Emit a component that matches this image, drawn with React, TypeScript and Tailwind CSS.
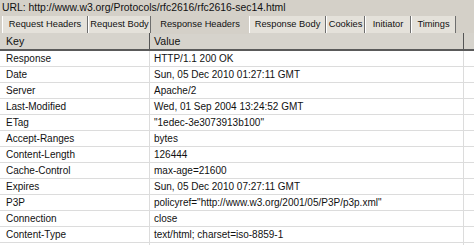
const tabs: [string, string][] = [
  ["Request Headers", "w-[86px]"],
  ["Request Body", "w-[63px]"],
  ["Response Headers", "w-[98px]"],
  ["Response Body", "w-[77px]"],
  ["Cookies", "w-[39px]"],
  ["Initiator", "w-[46px]"],
  ["Timings", "w-[45px]"],
];

const rows: [string, string][] = [
  ["Response", "HTTP/1.1 200 OK"],
  ["Date", "Sun, 05 Dec 2010 01:27:11 GMT"],
  ["Server", "Apache/2"],
  ["Last-Modified", "Wed, 01 Sep 2004 13:24:52 GMT"],
  ["ETag", "\"1edec-3e3073913b100\""],
  ["Accept-Ranges", "bytes"],
  ["Content-Length", "126444"],
  ["Cache-Control", "max-age=21600"],
  ["Expires", "Sun, 05 Dec 2010 07:27:11 GMT"],
  ["P3P", "policyref=\"http://www.w3.org/2001/05/P3P/p3p.xml\""],
  ["Connection", "close"],
  ["Content-Type", "text/html; charset=iso-8859-1"],
];

export default function App() {
  return (
    <div className="w-[474px] h-[245px] overflow-hidden bg-[#d4d0c8] text-[10px] text-[#111] font-['Liberation_Sans',sans-serif] leading-none whitespace-nowrap">
      <div className="h-[16px] flex items-center pl-[2px] text-[10.4px]">
        URL: http://www.w3.org/Protocols/rfc2616/rfc2616-sec14.html
      </div>
      <div className="h-[17px] flex items-end pl-[2px] text-[9.3px]">
        {tabs.map(([t, w]) =>
          t === "Response Headers" ? (
            <div key={t} className={`${w} shrink-0 h-[19px] flex items-center justify-center bg-[#d4d0c8] -mb-[1px]`}>
              {t}
            </div>
          ) : (
            <div
              key={t}
              className={`${w} shrink-0 h-[17px] flex items-center justify-center bg-[#e4e1da] border-l border-l-white border-r border-r-[#6e6e6e]`}
            >
              {t}
            </div>
          )
        )}
      </div>
      <div className="h-[18px] flex border-b-2 border-b-[#5a5a5a] bg-[#d6d3cc] text-[10.6px]">
        <div className="w-[150px] pl-[6px] flex items-center border-r border-r-[#555]">Key</div>
        <div className="w-[314px] pl-[4px] flex items-center border-r border-r-[#555]">Value</div>
        <div className="flex-1" />
      </div>
      <div className="bg-white">
        {rows.map(([k, v]) => (
          <div key={k} className="h-[16px] flex border-b border-b-[#dcdcdc]">
            <div className="w-[150px] pl-[6px] flex items-center border-r border-r-[#dcdcdc]">{k}</div>
            <div className="w-[314px] pl-[4px] flex items-center border-r border-r-[#dcdcdc]">{v}</div>
            <div className="flex-1" />
          </div>
        ))}
        <div className="h-[10px] flex">
          <div className="w-[150px] border-r border-r-[#dcdcdc]" />
          <div className="w-[314px] border-r border-r-[#dcdcdc]" />
        </div>
      </div>
    </div>
  );
}
